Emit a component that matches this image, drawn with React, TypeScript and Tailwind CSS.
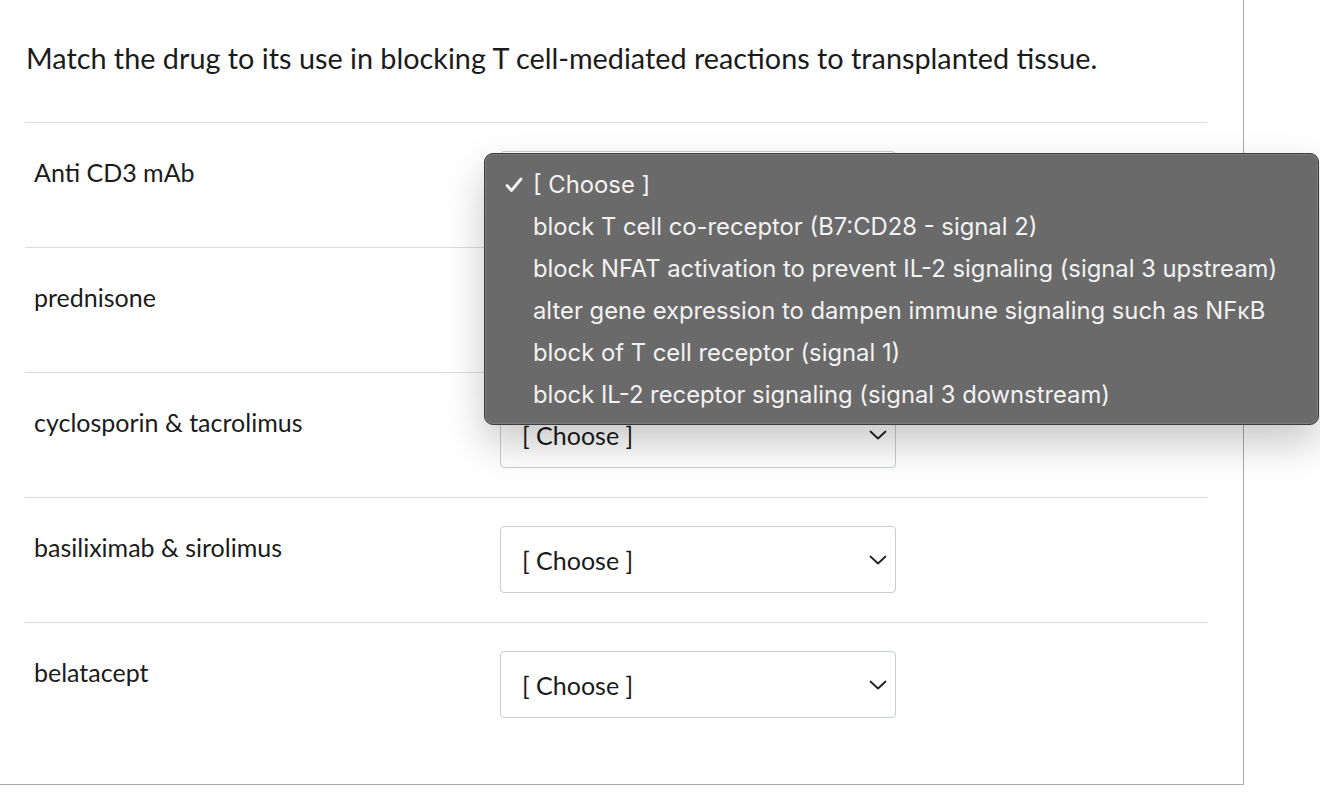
import React from "react";

const drugs = [
  "Anti CD3 mAb",
  "prednisone",
  "cyclosporin & tacrolimus",
  "basiliximab & sirolimus",
  "belatacept",
];

const options = [
  "[ Choose ]",
  "block T cell co-receptor (B7:CD28 - signal 2)",
  "block NFAT activation to prevent IL-2 signaling (signal 3 upstream)",
  "alter gene expression to dampen immune signaling such as NFκB",
  "block of T cell receptor (signal 1)",
  "block IL-2 receptor signaling (signal 3 downstream)",
];

function Chevron() {
  return (
    <svg width="18" height="10" viewBox="0 0 18 10" fill="none">
      <path d="M1.5 1.5L9 8.5L16.5 1.5" stroke="#222" strokeWidth="1.8" strokeLinecap="round" strokeLinejoin="round" />
    </svg>
  );
}

function Select() {
  return (
    <div className="flex h-[67px] w-[396px] items-center justify-between rounded-[4px] border border-[#c7cdd1] bg-white pl-[21px] pr-[8px]">
      <span className="pt-[2px] text-[25px] text-[#1b1b1b]">[ Choose ]</span>
      <Chevron />
    </div>
  );
}

function Menu() {
  return (
    <div
      className="absolute left-[484px] top-[153px] w-[835px] rounded-[9px] border border-[#3c3c3c] bg-[#6a6a6a] pt-[10px] pb-[8px] shadow-[0_18px_40px_rgba(0,0,0,0.22),inset_0_0_0_1px_rgba(255,255,255,0.12)]"
      style={{ fontFamily: "Inter, 'Noto Sans', sans-serif" }}
    >
      {options.map((o, i) => (
        <div key={o} className="flex h-[42px] items-center text-[23.8px] text-[#f2f2f2]">
          <span className="flex w-[48px] justify-end pr-[10px]">
            {i === 0 && (
              <svg width="18" height="16" viewBox="0 0 18 16" fill="none">
                <path d="M2 8.5L6.5 13.5L16 2" stroke="#f2f2f2" strokeWidth="2.8" strokeLinecap="round" strokeLinejoin="round" />
              </svg>
            )}
          </span>
          <span>{o}</span>
        </div>
      ))}
    </div>
  );
}

export default function App() {
  return (
    <div className="relative h-[801px] w-[1320px] overflow-hidden bg-white" style={{ fontFamily: "Lato, 'Open Sans', sans-serif" }}>
      <div className="h-[785px] w-[1244px] border-r border-b border-[#a9a9a9]">
        <h1 className="pl-[26px] pt-[40px] text-[28.8px] leading-[36px] text-[#1b1b1b]">
          Match the drug to its use in blocking T cell-mediated reactions to transplanted tissue.
        </h1>
        <div className="ml-[25px] mt-[46px] w-[1182px]">
          {drugs.map((d) => (
            <div key={d} className="flex h-[125px] border-t border-[#dcdcdc]">
              <div className="w-[475px] pl-[9px] pt-[34px] text-[25px] leading-[30px] text-[#1b1b1b]">{d}</div>
              <div className="pt-[28px]">
                <Select />
              </div>
            </div>
          ))}
        </div>
      </div>
      <Menu />
    </div>
  );
}
